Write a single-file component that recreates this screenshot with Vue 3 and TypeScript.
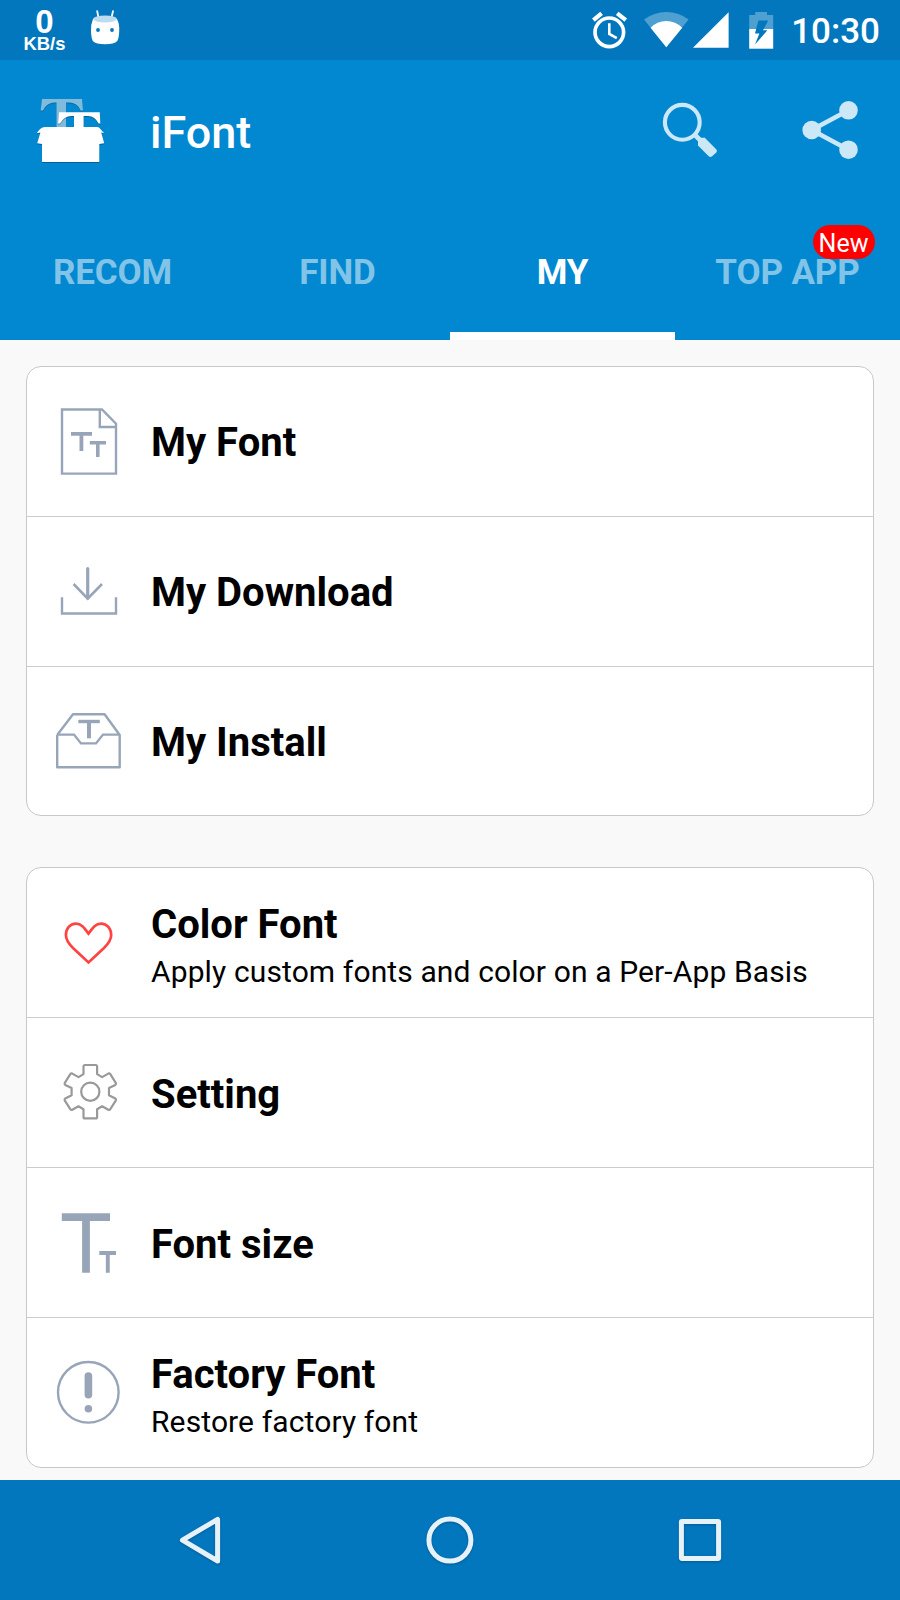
<script setup lang="ts">
import { ref } from 'vue'

interface Tab {
  label: string
  badge?: string
}

interface Item {
  icon: string
  viewBox: string
  title: string
  note?: string
}

const tabs: Tab[] = [
  { label: 'RECOM' },
  { label: 'FIND' },
  { label: 'MY' },
  { label: 'TOP APP', badge: 'New' },
]
const active = ref('MY')

const groups: Item[][] = [
  [
    { icon: 'font', viewBox: '50 402 80 80', title: 'My Font' },
    { icon: 'download', viewBox: '50 552 80 80', title: 'My Download' },
    { icon: 'install', viewBox: '50 701 80 80', title: 'My Install' },
  ],
  [
    {
      icon: 'heart',
      viewBox: '50 903 80 80',
      title: 'Color Font',
      note: 'Apply custom fonts and color on a Per-App Basis',
    },
    { icon: 'gear', viewBox: '50 1053 80 80', title: 'Setting' },
    { icon: 'size', viewBox: '50 1203 80 80', title: 'Font size' },
    { icon: 'alert', viewBox: '50 1353 80 80', title: 'Factory Font', note: 'Restore factory font' },
  ],
]
</script>

<template>
  <div class="screen">
    <div class="status">
      <div class="speed">
        <span class="speed-value">0</span>
        <span class="speed-unit">KB/s</span>
      </div>
      <svg class="jar" viewBox="86 0 40 60">
        <path d="M97.2 11.2 L98.6 18 M113 11.2 L111.4 18" stroke="#fff" stroke-width="1.8" stroke-linecap="round" />
        <path d="M93 19 Q105 14 117 19 Q119.6 24 119.2 31 Q119 38 117.3 41 Q114 44.2 105 44.2 Q96 44.2 92.8 41 Q91.2 38 91 31 Q90.8 24 93 19Z" fill="#fff" />
        <ellipse cx="105" cy="19" rx="11.8" ry="3.4" fill="#bcdcef" />
        <circle cx="98" cy="30" r="1.9" fill="#0277bd" />
        <circle cx="112" cy="30" r="1.9" fill="#0277bd" />
      </svg>
      <svg class="status-icons" viewBox="588 0 190 60">
        <circle cx="609.3" cy="32.3" r="14.3" fill="none" stroke="#fff" stroke-width="3.7" />
        <path d="M609.3 23.3 V34 L616.8 38.2" fill="none" stroke="#fff" stroke-width="2.6" />
        <path d="M593.4 20.2 L601.6 13.4 M617.2 13.4 L625.8 20.2" stroke="#fff" stroke-width="4.2" />
        <path d="M666.3 47.3 L644 19.6 Q654 12 666.3 12 Q679 12 688.6 19.6Z" fill="#4ea0d1" />
        <path d="M666.3 47.3 L650.6 27.8 Q657 21 666.3 21 Q675.6 21 682.2 27.8Z" fill="#fff" />
        <path d="M693 47.8 H728.6 V12.2Z" fill="#fff" />
        <path d="M749.2 15 H755.2 V12 H767 V15 H773.2 V29 H749.2Z" fill="#4ea0d1" />
        <path d="M749.2 29 H773.2 V48.7 H749.2Z" fill="#fff" />
        <path d="M758.4 20.4 H768.2 L763 30.2 H767.4 L755 44.6 L759.4 33.6 H755Z" fill="#0277bd" />
      </svg>
      <span class="clock">10:30</span>
    </div>

    <header class="bar">
      <svg class="logo" viewBox="30 90 80 80">
        <path class="rear" d="M42 99 H82 L83 110.4 H80.6 Q77.5 103 70 102.6 H66 V127.5 H56.5 V102.6 H54 Q46.5 103 43 110.4 H40.7Z" />
        <g class="front">
          <path d="M59 112.3 H99.8 L100.3 123.4 H98.6 Q95 116.2 88 115.9 H83.6 V128 H74 V115.9 H71.4 Q64 116.2 60 123.4 H58Z" />
          <path d="M45 127 H97 L99 127.4 L104.2 133.2 L101.2 132.6 L104.2 143.3 L99.3 144 V162 H42 V144 L37.2 143.3 L40.4 132.6 L36.8 133.2 Q40 127.6 45 127Z" />
        </g>
      </svg>
      <h1>iFont</h1>
      <svg class="action search" viewBox="650 90 80 80">
        <circle cx="682.3" cy="122.3" r="17.4" fill="none" stroke="#cce7f6" stroke-width="4.1" />
        <path d="M694.5 134.5 L701 141" stroke="#cce7f6" stroke-width="4.6" />
        <path d="M698 141 L701.3 137.8 H704.8 L716.4 149.4 Q717.6 151 716.3 152.5 L711.8 156.6 Q710.2 157.6 708.7 156.3 L698 145.6Z" fill="#cce7f6" />
      </svg>
      <svg class="action" viewBox="790 90 80 80">
        <path d="M848.5 110.3 L811.7 130 L848.5 149.7" fill="none" stroke="#cce7f6" stroke-width="4.6" />
        <g fill="#cce7f6">
          <circle cx="811.7" cy="130" r="9.3" />
          <circle cx="848.5" cy="110.3" r="9.3" />
          <circle cx="848.5" cy="149.7" r="9.3" />
        </g>
      </svg>
    </header>

    <nav class="tabs">
      <button
        v-for="tab in tabs"
        :key="tab.label"
        class="tab"
        :class="{ active: tab.label === active }"
        @click="active = tab.label"
      >
        {{ tab.label }}
        <span v-if="tab.badge" class="badge">{{ tab.badge }}</span>
      </button>
    </nav>

    <main>
      <section v-for="(group, g) in groups" :key="g" class="card">
        <div v-for="item in group" :key="item.title" class="row">
          <svg class="icon" :viewBox="item.viewBox">
            <g v-if="item.icon === 'font'" class="line">
              <path d="M62 409.5 H102 L116 423.7 V473.6 H62Z M99.8 409.5 V427 H116" />
              <path d="M71 433.9 H92 M81.4 433.9 V451" stroke-width="3.8" />
              <path d="M89.8 442.8 H106 M97.8 442.8 V457" stroke-width="3.6" />
            </g>
            <g v-else-if="item.icon === 'download'" class="line">
              <path d="M62 597.2 V613.5 H116 V597.2" />
              <path d="M87.7 568.5 V598" stroke-width="3.2" stroke-linecap="round" />
              <path d="M73.6 584 L87.7 598.6 L102 584" stroke-width="2.6" />
            </g>
            <g v-else-if="item.icon === 'install'" class="line">
              <path d="M57.2 735 V767.3 H119.7 V735 L104.6 714.3 H73 L57.2 735" stroke-linejoin="round" />
              <path d="M57.2 734.6 H74 L81 743.4 H96 L103 734.6 H119.7" />
              <path d="M78.3 721.5 H99.8" stroke-width="3.4" />
              <path d="M89 721.5 V738.3" stroke-width="4" />
            </g>
            <path
              v-else-if="item.icon === 'heart'"
              class="heart"
              d="M88.5 933.6 C84 927.5 81 923.6 76 923.6 C70 923.6 65.9 928.7 65.9 935 C65.9 940.5 69 944 73 948 L88.5 962.4 L104 948 C108 944 111.2 940.5 111.2 935 C111.2 928.7 107 923.6 101 923.6 C96 923.6 93 927.5 88.5 933.6Z"
            />
            <g v-else-if="item.icon === 'gear'" class="gear" transform="translate(90.3 1091.7)">
              <path
                d="M-5.4 -26.7 H5.4 Q6.8 -26.7 6.8 -25.2 V-17.6 L11.8 -14.6 L18 -18.1 Q19.2 -18.6 20 -17.5 L25.6 -8.6 Q26.1 -7.6 25 -6.8 L18.7 -3.6 V3.6 L25 6.8 Q26.1 7.6 25.6 8.6 L20 17.5 Q19.2 18.6 18 18.1 L11.8 14.6 L6.8 17.6 V25.2 Q6.8 26.7 5.4 26.7 H-5.4 Q-6.8 26.7 -6.8 25.2 V17.6 L-11.8 14.6 L-18 18.1 Q-19.2 18.6 -20 17.5 L-25.6 8.6 Q-26.1 7.6 -25 6.8 L-18.7 3.6 V-3.6 L-25 -6.8 Q-26.1 -7.6 -25.6 -8.6 L-20 -17.5 Q-19.2 -18.6 -18 -18.1 L-11.8 -14.6 L-6.8 -17.6 V-25.2 Q-6.8 -26.7 -5.4 -26.7Z"
              />
              <circle r="9.1" />
            </g>
            <g v-else-if="item.icon === 'size'" class="line">
              <path d="M61.8 1217.2 H110 M86 1217.2 V1272.7" stroke-width="7.8" />
              <path d="M99.3 1253 H116 M107.8 1253 V1272.7" stroke-width="3.9" />
            </g>
            <g v-else class="line">
              <circle cx="88.3" cy="1392.3" r="30.3" />
              <path d="M88.4 1376 V1394.8" stroke-width="7.6" stroke-linecap="round" />
              <circle class="dot" cx="88.4" cy="1408.7" r="3.8" />
            </g>
          </svg>
          <div class="text" :class="{ double: item.note }">
            <div class="title">{{ item.title }}</div>
            <div v-if="item.note" class="note">{{ item.note }}</div>
          </div>
        </div>
      </section>
    </main>

    <footer class="nav">
      <svg viewBox="170 1510 60 60">
        <path d="M217.6 1519.4 V1561 L182.4 1540.2Z" />
      </svg>
      <svg viewBox="420 1510 60 60">
        <circle cx="449.9" cy="1540.1" r="21" />
      </svg>
      <svg viewBox="670 1510 60 60">
        <rect x="681.4" y="1521.4" width="37.2" height="37" rx="0.6" />
      </svg>
    </footer>
  </div>
</template>

<style>
body {
  margin: 0;
}
</style>

<style scoped>
.screen {
  display: flex;
  flex-direction: column;
  width: 900px;
  height: 1600px;
  overflow: hidden;
  background: #f9f9f9;
  font-family: Roboto, "Liberation Sans", sans-serif;
}
svg {
  display: block;
  flex: none;
}
.status {
  box-sizing: border-box;
  display: flex;
  height: 60px;
  flex: none;
  padding: 0 20px;
  background: #0277bd;
  color: #fff;
}
.speed {
  display: flex;
  flex-direction: column;
  align-items: center;
  width: 49px;
  font-family: "Liberation Sans", sans-serif;
  font-weight: 700;
}
.speed-value {
  margin-top: 9px;
  font-size: 33px;
  line-height: 25px;
}
.speed-unit {
  font-size: 18.4px;
  line-height: 20px;
}
.jar {
  width: 40px;
  height: 60px;
  margin-left: 17px;
}
.status-icons {
  width: 190px;
  height: 60px;
  margin-left: auto;
}
.clock {
  width: 102px;
  font-size: 35px;
  font-weight: 500;
  line-height: 63px;
  text-align: right;
}
.bar {
  display: flex;
  align-items: center;
  height: 140px;
  flex: none;
  padding: 0 30px;
  background: #0288d1;
}
.logo {
  width: 80px;
  height: 80px;
}
.rear {
  fill: #81bbdb;
  filter: drop-shadow(0 1px 0.6px rgba(0, 50, 90, 0.3));
}
.front {
  fill: #fff;
  filter: drop-shadow(0 1px 0.6px rgba(0, 50, 90, 0.45));
}
h1 {
  margin: 6px 0 0 40px;
  color: #fff;
  font-size: 45px;
  font-weight: 500;
  line-height: 54px;
}
.action {
  width: 80px;
  height: 80px;
}
.search {
  margin: 0 60px 0 auto;
}
.tabs {
  display: grid;
  grid-template-columns: repeat(4, 1fr);
  height: 140px;
  flex: none;
  background: #0288d1;
}
.tab {
  position: relative;
  padding: 4px 0 0;
  border: 0;
  background: none;
  color: #82c4e8;
  font: 700 35px Roboto, sans-serif;
  letter-spacing: -0.12px;
}
.tab.active {
  color: #fff;
  box-shadow: inset 0 -8px #fff;
}
.badge {
  box-sizing: border-box;
  position: absolute;
  top: 25px;
  right: 25px;
  width: 62px;
  height: 34px;
  padding-right: 1px;
  border-radius: 17px;
  background: #f00;
  color: #fff;
  font-size: 25px;
  font-weight: 400;
  line-height: 38px;
  letter-spacing: 0;
  text-align: center;
}
main {
  display: flex;
  flex: 1;
  flex-direction: column;
  gap: 51px;
  padding: 26px 26px 0;
}
.card {
  border: 1px solid #c6c8ca;
  border-radius: 15px;
  background: #fff;
}
.row {
  box-sizing: border-box;
  display: flex;
  align-items: center;
  height: 150px;
  padding-left: 23px;
  border-bottom: 1px solid #cacccd;
}
.row:last-child {
  height: 149px;
  border-bottom: 0;
}
.card:first-child .row:last-child {
  height: 148px;
}
.icon {
  width: 80px;
  height: 80px;
}
.line {
  fill: none;
  stroke: #98a5b8;
  stroke-width: 2.4;
}
.dot {
  fill: #98a5b8;
  stroke: none;
}
.heart {
  fill: none;
  stroke: #ff4343;
  stroke-width: 2.7;
}
.gear {
  fill: none;
  stroke: #999;
  stroke-width: 2.2;
  stroke-linejoin: round;
}
.text {
  padding-top: 2px;
  margin-left: 21px;
  color: #000;
}
.card:first-child .row:last-child .text,
.card:last-child .text:not(.double) {
  padding-top: 4px;
}
.text.double {
  padding-top: 6px;
}
.title {
  font-size: 40px;
  font-weight: 700;
  line-height: 52px;
}
.note {
  font-size: 30px;
  line-height: 42px;
  letter-spacing: 0.12px;
}
.nav {
  display: flex;
  justify-content: space-between;
  align-items: center;
  height: 120px;
  flex: none;
  padding: 0 170px;
  background: #0277bd;
}
.nav svg {
  width: 60px;
  height: 60px;
  fill: none;
  stroke: #e6f1f8;
  stroke-width: 5;
  stroke-linejoin: round;
  filter: drop-shadow(0 1px 1px rgba(0, 40, 80, 0.35));
}
</style>
